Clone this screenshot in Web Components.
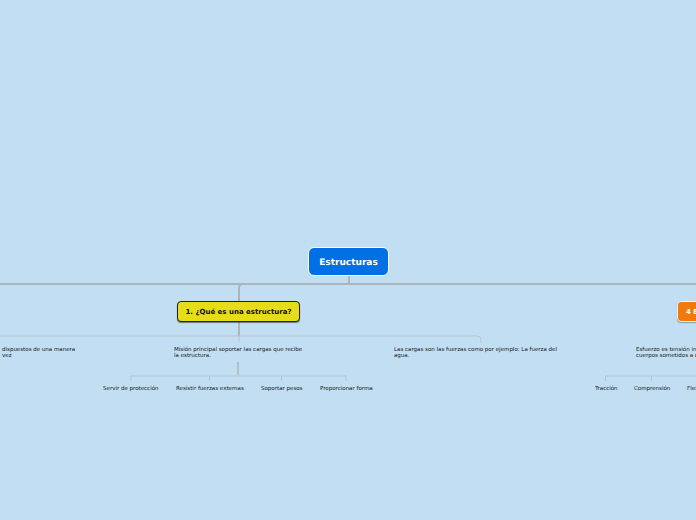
<!DOCTYPE html>
<html>
<head>
<meta charset="utf-8">
<style>
  html, body { margin: 0; height: 100%; }
  body { background: #c2def2; overflow: hidden; }
</style>
</head>
<body>
<mind-map>
  <map-node kind="root" style="left:308px;top:247px">Estructuras</map-node>
  <map-node kind="yellow" style="left:177px;top:301px">1. ¿Qué es una estructura?</map-node>
  <map-node kind="orange" style="left:677px;top:301px">4 Esfuerzos</map-node>

  <map-text style="left:2px;top:347px;width:90px">dispuestos de una manera<br>vez</map-text>
  <map-text style="left:174px;top:347px;width:140px">Misión principal soportar las cargas que recibe<br>la estructura.</map-text>
  <map-text style="left:394px;top:347px;width:180px">Las cargas son las fuerzas como por ejemplo: La fuerza del<br>agua.</map-text>
  <map-text style="left:636px;top:347px;width:120px">Esfuerzo es tensión interna de los<br>cuerpos sometidos a cargas</map-text>

  <map-text style="left:103px;top:386px">Servir de protección</map-text>
  <map-text style="left:176px;top:386px">Resistir fuerzas externas</map-text>
  <map-text style="left:261px;top:386px">Soportar pesos</map-text>
  <map-text style="left:320px;top:386px">Proporcionar forma</map-text>
  <map-text style="left:595px;top:386px">Tracción</map-text>
  <map-text style="left:634px;top:386px">Comprensión</map-text>
  <map-text style="left:687px;top:386px">Flexión</map-text>
</mind-map>

<script>
class MindMap extends HTMLElement {
  constructor() {
    super();
    this.attachShadow({ mode: "open" });
    this.shadowRoot.innerHTML = `
      <style>
        :host { display: block; position: relative; width: 696px; height: 520px; overflow: hidden; }
        svg { position: absolute; left: 0; top: 0; }
        .main { stroke: #adb5bb; stroke-width: 2; fill: none; }
        .sub { stroke: #b3c5d2; stroke-width: 1; fill: none; }
        .drop { stroke: #adb5bb; stroke-width: 1.5; fill: none; }
      </style>
      <svg width="696" height="520" viewBox="0 0 696 520">
        <!-- root to main topics -->
        <path class="main" d="M349 275V284"/>
        <path class="main" d="M0 284H696"/>
        <path class="main" d="M239 301V288Q239 284 243 284"/>
        <!-- topic 1 children -->
        <path class="main" d="M239 321V336"/>
        <path class="sub" d="M0 336H477Q481 336 481 340V343"/>
        <path class="sub" d="M239 336V342"/>
        <!-- mission children -->
        <path class="drop" d="M238 362V375"/>
        <path class="sub" d="M131 381V376H346V381"/>
        <path class="sub" d="M209.500 376V381M281.500 376V381"/>
        <!-- topic 4 children -->
        <path class="sub" d="M605.500 381V376H696M651.500 376V381"/>
      </svg>
      <slot></slot>
    `;
  }
}
customElements.define("mind-map", MindMap);

class MapNode extends HTMLElement {
  constructor() {
    super();
    this.attachShadow({ mode: "open" });
    this.shadowRoot.innerHTML = `
      <style>
        :host {
          position: absolute;
          display: flex;
          align-items: center;
          justify-content: center;
          box-sizing: border-box;
          font-family: "DejaVu Sans", sans-serif;
          font-weight: 700;
          white-space: nowrap;
          text-rendering: geometricPrecision;
        }
        :host([kind="root"]) {
          width: 81px; height: 29px;
          padding-top: 2px;
          background: #0070e4; color: #fff;
          border: 1.500px solid #fff; border-radius: 6px;
          font-size: 9px;
        }
        :host([kind="yellow"]) {
          width: 123px; height: 21px;
          background: #e6dc1a; color: #111;
          border: 1px solid #222; border-radius: 4px;
          box-shadow: 0 1px 1px rgba(0,0,0,.45);
          font-size: 7px;
        }
        :host([kind="orange"]) {
          width: 80px; height: 21px;
          background: #f07a0c; color: #fff;
          border: 1px solid #f3f3f3; border-radius: 4px;
          box-shadow: 0 1px 1px rgba(0,0,0,.3);
          font-size: 7px;
          justify-content: flex-start;
          padding-left: 8px;
        }
      </style>
      <slot></slot>
    `;
  }
}
customElements.define("map-node", MapNode);

class MapText extends HTMLElement {
  constructor() {
    super();
    this.attachShadow({ mode: "open" });
    this.shadowRoot.innerHTML = `
      <style>
        :host {
          position: absolute;
          display: block;
          font-family: "DejaVu Sans", sans-serif;
          font-size: 5.500px;
          line-height: 6px;
          color: #14181b;
          white-space: nowrap;
          text-rendering: geometricPrecision;
        }
      </style>
      <slot></slot>
    `;
  }
}
customElements.define("map-text", MapText);
</script>
</body>
</html>
